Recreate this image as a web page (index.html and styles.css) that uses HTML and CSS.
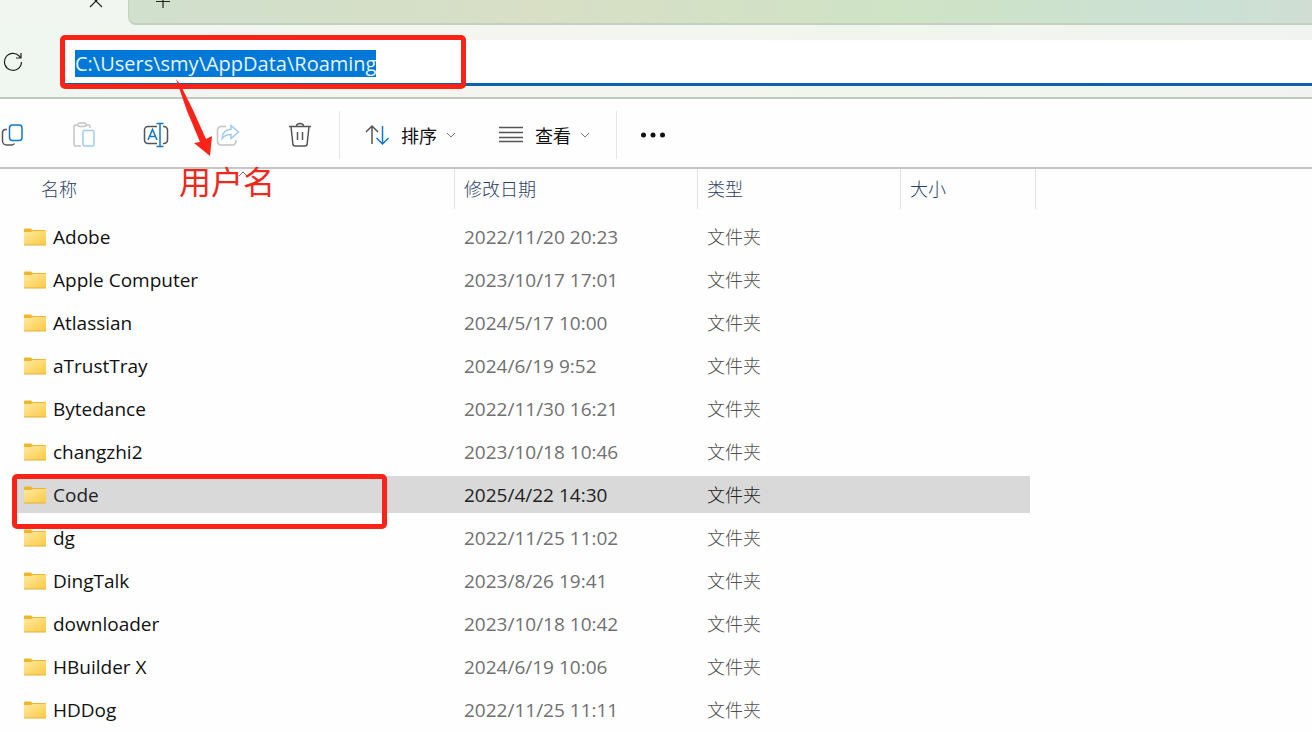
FILE: index.html
```
<!DOCTYPE html>
<html lang="zh">

<head>
  <meta charset="UTF-8">
  <meta name="viewport" content="width=device-width, initial-scale=1.0">
  <title>Roaming</title>
  <link rel="stylesheet" href="styles.css">
</head>

<body>
  <div class="tab-bar">
    <div class="tab">
      <button class="tab-btn" aria-label="关闭">
        <svg width="16" height="16" viewBox="0 0 16 16"><path d="M2 2l12 12M14 2L2 14"/></svg>
      </button>
    </div>
    <div class="tab-rest">
      <button class="tab-btn" aria-label="新建标签页">
        <svg width="16" height="16" viewBox="0 0 16 16"><path d="M8 1v14M1 8.500h14"/></svg>
      </button>
    </div>
  </div>

  <div class="address-row">
    <button class="refresh" aria-label="刷新">
      <svg width="20" height="20" viewBox="0 0 20 20"><path d="M18.500 10a8.500 8.500 0 1 1-2.500-6.200L18 6M18 1v5h-5"/></svg>
    </button>
    <input class="address" id="address" type="text" aria-label="地址" spellcheck="false" value="C:\Users\smy\AppData\Roaming">
  </div>

  <div class="toolbar">
    <button class="icon-btn" aria-label="复制">
      <svg width="24" height="24" viewBox="0 0 24 24">
        <path class="dark" d="M7 6.500H5.500a3 3 0 0 0-3 3V18a4 4 0 0 0 4 4H12a3 3 0 0 0 2.500-1.500"/>
        <rect class="blue" x="9.500" y="2" width="12.500" height="15.500" rx="3"/>
      </svg>
    </button>
    <button class="icon-btn" aria-label="粘贴" disabled>
      <svg width="24" height="26" viewBox="0 0 24 26">
        <path class="gray" d="M6 3H3.500A1.500 1.500 0 0 0 2 4.500v18A1.500 1.500 0 0 0 3.500 24H9M14 3h2.500A1.500 1.500 0 0 1 18 4.500V6"/>
        <rect class="gray" x="6" y="1" width="8" height="3.500" rx="1.500"/>
        <rect class="pale" x="11" y="8.500" width="11" height="15.500" rx="1.500"/>
      </svg>
    </button>
    <button class="icon-btn" aria-label="重命名">
      <svg width="26" height="26" viewBox="0 0 26 26">
        <path class="dark" d="M14 4.500H5a3.500 3.500 0 0 0-3.500 3.500v10A3.500 3.500 0 0 0 5 21.500h9M20 4.500h1a3.500 3.500 0 0 1 3.500 3.500v10a3.500 3.500 0 0 1-3.500 3.500h-1"/>
        <path class="blue" d="M5 18L9.500 7.500 14 18M6.500 14.500h6M17 1.500v23M13.500 1.500h7M13.500 24.500h7"/>
      </svg>
    </button>
    <button class="icon-btn" aria-label="共享" disabled>
      <svg width="24" height="24" viewBox="0 0 24 24">
        <path class="gray" d="M10 3.500H5A3.500 3.500 0 0 0 1.500 7v11.500A3.500 3.500 0 0 0 5 22h11.500a3.500 3.500 0 0 0 3.500-3.500V17"/>
        <path class="pale" d="M15 2.500L22.500 9 15 15.500v-4c-4-.2-6.500 1-9 4 .5-5.500 3.500-9 9-9.200z"/>
      </svg>
    </button>
    <button class="icon-btn" aria-label="删除">
      <svg width="24" height="26" viewBox="0 0 24 26">
        <path class="dark" d="M1 4.500h22M8.500 4.500c0-4 7-4 7 0M3 4.500l1.800 17a2.500 2.500 0 0 0 2.500 2.500h9.400a2.500 2.500 0 0 0 2.500-2.500L21 4.500M9.500 10v8M14.500 10v8"/>
      </svg>
    </button>
    <button class="menu-btn sort">
      <svg width="24" height="24" viewBox="0 0 24 24">
        <path class="dark" d="M7 21V3M1 9l6-6 6 6"/>
        <path class="blue" d="M17.500 3v18M11.500 15l6 6 6-6"/>
      </svg>
      <span>排序</span>
      <svg width="10" height="6" viewBox="0 0 10 6"><path class="arrow" d="M1 1l4 4 4-4"/></svg>
    </button>
    <button class="menu-btn view">
      <svg width="24" height="24" viewBox="0 0 24 24">
        <path class="dark" d="M0 4.500h24M0 9.500h24M0 14.500h24M0 18.500h24"/>
      </svg>
      <span>查看</span>
      <svg width="10" height="6" viewBox="0 0 10 6"><path class="arrow" d="M1 1l4 4 4-4"/></svg>
    </button>
    <button class="menu-btn more" aria-label="查看更多">
      <svg width="24" height="6" viewBox="0 0 24 6"><circle cx="2.500" cy="3" r="2.500"/><circle cx="12" cy="3" r="2.500"/><circle cx="21.500" cy="3" r="2.500"/></svg>
    </button>
  </div>

  <table class="files">
    <thead>
      <tr>
        <th class="col-name">名称
          <svg class="sort-mark" width="10" height="6" viewBox="0 0 10 6"><path class="arrow" d="M1 5l4-4 4 4"/></svg>
        </th>
        <th class="col-date">修改日期</th>
        <th class="col-type">类型</th>
        <th class="col-size">大小</th>
      </tr>
    </thead>
    <tbody id="file-list"></tbody>
  </table>

  <!-- 标注 -->
  <div class="mark mark-path"></div>
  <div class="mark mark-code"></div>
  <svg class="mark-arrow" width="40" height="80" viewBox="0 0 40 80"><path d="M1 0L5 5 18 31 31 60 37 57 35 77 19 64 25 63 12 32z"/></svg>
  <div class="mark-text">用户名</div>

  <script>
    const files = [
      ['Adobe', '2022/11/20 20:23'],
      ['Apple Computer', '2023/10/17 17:01'],
      ['Atlassian', '2024/5/17 10:00'],
      ['aTrustTray', '2024/6/19 9:52'],
      ['Bytedance', '2022/11/30 16:21'],
      ['changzhi2', '2023/10/18 10:46'],
      ['Code', '2025/4/22 14:30'],
      ['dg', '2022/11/25 11:02'],
      ['DingTalk', '2023/8/26 19:41'],
      ['downloader', '2023/10/18 10:42'],
      ['HBuilder X', '2024/6/19 10:06'],
      ['HDDog', '2022/11/25 11:11']
    ];

    const folderIcon = `
      <svg class="folder" width="22" height="18" viewBox="0 0 22 18">
        <defs>
          <linearGradient id="fold" x1="0" y1="0" x2="1" y2="1">
            <stop offset="0" stop-color="#ffe9a0"/>
            <stop offset="1" stop-color="#fcca45"/>
          </linearGradient>
        </defs>
        <path fill="#efb62c" d="M0 1.500Q0 .5 1 .5h6L8.500 2H21q1 0 1 1v4H0z"/>
        <path fill="url(#fold)" d="M0 4h7l1.500-1H22v14H0z"/>
        <path fill="#e5af35" d="M0 16.500h22v.5q0 .5-1 .5H1q-1 0-1-.5z"/>
      </svg>`;

    // 生成文件列表
    document.getElementById('file-list').innerHTML = files.map(([name, date]) => `
      <tr class="${name === 'Code' ? 'selected' : ''}">
        <td class="name"><div class="name-box">${folderIcon}<span>${name}</span></div></td>
        <td>${date}</td>
        <td class="type">文件夹</td>
        <td></td>
      </tr>`).join('');

    // 默认选中地址
    const address = document.getElementById('address');
    address.focus();
    address.select();
  </script>
</body>

</html>
```
FILE: styles.css
```
* {
  box-sizing: border-box;
}

body {
  margin: 0;
  background-color: #fefefe;
  font-family: "Open Sans", "Noto Sans CJK SC", sans-serif;
  font-size: 19px;
  color: #111;
  overflow: hidden;
}

button {
  border: none;
  background: none;
  padding: 0;
  font: inherit;
  color: inherit;
}

svg {
  display: block;
  fill: none;
  stroke-width: 1.5;
}

.tab-bar {
  display: flex;
  height: 25px;
  background-color: #f1f6f0;
}

.tab {
  width: 128px;
  padding-left: 88px;
}

.tab-rest {
  flex: 1;
  padding-left: 26px;
  border-bottom: 2px solid #c4cfbf;
  border-left: 1px solid #c4cfbf;
  border-bottom-left-radius: 8px;
  background: linear-gradient(90deg, #d0e0cd, #d8dfc5 34%, #cfe3c5 65%, #cce1d5 90%, #d0ded3);
}

.tab-btn {
  display: block;
  margin-top: -7px;
  stroke: #222;
}

.tab-btn svg {
  stroke-width: 1.2;
}

.address-row {
  display: flex;
  align-items: flex-start;
  height: 74px;
  padding-top: 15px;
  border-bottom: 2px solid #c3c8bf;
  background: linear-gradient(90deg, #f0f6f0, #f4f5ee 35%, #f0f6ec 70%, #f1f3f1);
}

.refresh {
  margin: 12px 42px 0 3px;
  stroke: #222;
}

.refresh svg {
  stroke-width: 1.2;
}

.address {
  flex: 1;
  height: 46px;
  padding: 3px 10px 0;
  border: none;
  border-bottom: 3px solid #0a63b1;
  outline: none;
  background-color: #fff;
  font-family: "Open Sans", sans-serif;
  font-size: 20px;
  color: #111;
}

.address::selection {
  background-color: #0078d7;
  color: #e6f4ff;
}

.toolbar {
  display: flex;
  align-items: center;
  height: 70px;
  padding-top: 3px;
  border-bottom: 2px solid #c6c6c6;
  font-size: 18px;
}

.icon-btn {
  display: flex;
  justify-content: center;
  flex: none;
  width: 72px;
}

.icon-btn:first-child {
  margin-left: -24px;
}

.menu-btn {
  display: flex;
  align-items: center;
  gap: 12px;
  height: 48px;
}

.menu-btn span {
  margin-right: -3px;
}

.sort {
  margin-left: 3px;
  padding-left: 25px;
  border-left: 1px solid #e6e6e6;
}

.view {
  padding-left: 43px;
  padding-right: 26px;
  border-right: 1px solid #e6e6e6;
}

.more {
  padding-left: 24px;
}

.more svg {
  fill: #111;
}

.dark {
  stroke: #555;
}

.blue {
  stroke: #1177c8;
}

.gray {
  stroke: #c4c4c4;
}

.pale {
  stroke: #9fcbee;
}

.arrow {
  stroke: #777;
  stroke-width: 1;
}

.files {
  table-layout: fixed;
  width: 1036px;
  border-spacing: 0;
  text-align: left;
}

.files th {
  position: relative;
  height: 46px;
  padding: 0 9px 6px;
  background: linear-gradient(#e2e2e2, #e2e2e2) right top / 1px 40px no-repeat;
  font-size: 18px;
  font-weight: 300;
  line-height: 24px;
  color: #2c4064;
}

.files .col-name {
  width: 455px;
  padding-left: 41px;
}

.col-date {
  width: 243px;
}

.col-type {
  width: 203px;
}

.col-size {
  width: 135px;
}

.sort-mark {
  position: absolute;
  top: 2px;
  left: 238px;
}

.files td {
  height: 43px;
  padding: 0 9px;
  border: 3px solid transparent;
  border-width: 3px 0;
  background-clip: padding-box;
  line-height: 24px;
  color: #707070;
}

.files td:first-child {
  border-left-width: 17px;
}

.files td:last-child {
  border-right-width: 6px;
}

.files .name {
  padding-left: 7px;
  color: #111;
}

.name-box {
  display: flex;
  align-items: center;
  gap: 7px;
}

.files .type {
  font-size: 18px;
  font-weight: 300;
  color: #505050;
}

.files .selected td {
  background-color: #d9d9d9;
  color: #222;
}

.mark {
  position: absolute;
  border: 5px solid #fa2318;
  border-radius: 5px;
  pointer-events: none;
}

.mark-path {
  top: 35px;
  left: 60px;
  width: 406px;
  height: 54px;
}

.mark-code {
  top: 474px;
  left: 12px;
  width: 375px;
  height: 55px;
}

.mark-arrow {
  position: absolute;
  top: 79px;
  left: 175px;
  fill: #fa2318;
}

.mark-text {
  position: absolute;
  top: 158px;
  left: 179px;
  font-size: 32px;
  line-height: 48px;
  color: #f0281c;
}
```
